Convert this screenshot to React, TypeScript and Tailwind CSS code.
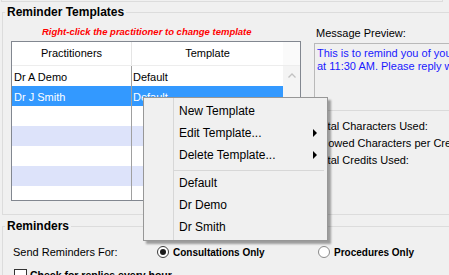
import React from "react";

const rows: { name: string; tpl: string; bg: string; sel?: boolean; h?: string }[] = [
  { name: "Dr A Demo", tpl: "Default", bg: "bg-white" },
  { name: "Dr J Smith", tpl: "Default", bg: "bg-[#3399ff]", sel: true },
  { name: "", tpl: "", bg: "bg-white" },
  { name: "", tpl: "", bg: "bg-[#dde3fa]" },
  { name: "", tpl: "", bg: "bg-white" },
  { name: "", tpl: "", bg: "bg-[#dde3fa]" },
  { name: "", tpl: "", bg: "bg-white", h: "h-[14px]" },
];

function MenuItem({ label, arrow }: { label: string; arrow?: boolean }) {
  return (
    <div className="h-[22px] flex items-center justify-between pl-[5px] pr-[10px] text-[12px] text-black">
      <span>{label}</span>
      {arrow && (
        <span className="w-0 h-0 border-y-[4px] border-y-transparent border-l-[4px] border-l-black" />
      )}
    </div>
  );
}

export default function App() {
  return (
    <div className="relative w-[449px] h-[275px] overflow-hidden bg-[#f0f0f0] font-['Liberation_Sans',Arial,sans-serif] text-[11px] text-black">
      <div className="ml-[1px] w-[442px] h-[2px] border-x border-b border-[#dcdcdc]" />

      {/* Reminder Templates group */}
      <fieldset className="mt-[2px] ml-[2px] w-[470px] h-[211px] border border-[#dcdcdc]">
        <legend className="ml-[2px] px-[2px] text-[12px] leading-[16px] font-bold">Reminder Templates</legend>
        <div className="flex">
          <div className="pl-[8px]">
            <div className="mt-[6px] pl-[31px] text-[9.5px] leading-[12px] font-bold italic text-[#ff0000] whitespace-nowrap">
              Right-click the practitioner to change template
            </div>
            <div className="mt-[3px] w-[290px] h-[160px] border border-[#828790] bg-white flex flex-col">
              <div className="flex h-[24px] border-b border-[#ededed] bg-white text-[11px]">
                <div className="w-[120px] border-r border-[#e5e5e5] flex items-center justify-center">Practitioners</div>
                <div className="w-[151px] flex items-center justify-center">Template</div>
                <div className="flex-1 bg-[#fafafa]" />
              </div>
              <div className="flex flex-1">
                <div className="w-[271px] flex flex-col">
                  {rows.map((r, i) => (
                    <div key={i} className={`flex ${r.h ?? "h-[20px]"} ${r.bg} ${r.sel ? "text-white" : "text-black"} text-[11px] leading-[20px]`}>
                      <div className="w-[120px] border-r border-[#a0a0a0] pl-[2px] pt-[1px] whitespace-nowrap">{r.name}</div>
                      <div className="flex-1 pl-[1px] pt-[1px] whitespace-nowrap">{r.tpl}</div>
                    </div>
                  ))}
                </div>
                <div className="flex-1 bg-[#f4f4f4] flex justify-center pt-[7px]">
                  <svg width="8" height="5" viewBox="0 0 8 5">
                    <path d="M0.5 4.5 L4 1 L7.5 4.5" fill="none" stroke="#c2c2c2" strokeWidth="1.3" />
                  </svg>
                </div>
              </div>
            </div>
          </div>

          <div className="ml-[13px] flex-1">
            <div className="mt-[7px] pl-[2px] leading-[13px] whitespace-nowrap">Message Preview:</div>
            <div className="mt-[3px] h-[68px] border border-[#b9b9b9] border-b-[#dadada] border-r-0 pl-[2px] pt-[3px] text-[#1a1aff] leading-[13px] whitespace-nowrap overflow-hidden">
              <div>This is to remind you of your appointment with Dr A Demo on</div>
              <div>at 11:30 AM. Please reply with YES to confirm.</div>
            </div>
            <div className="mt-[7px] pl-[2px] leading-[17px] whitespace-nowrap">
              <div>Total Characters Used:</div>
              <div>Allowed Characters per Credit:</div>
              <div>Total Credits Used:</div>
            </div>
          </div>
        </div>
      </fieldset>

      {/* Reminders group */}
      <fieldset className="mt-[3px] ml-[2px] w-[470px] h-[80px] border border-[#dcdcdc]">
        <legend className="ml-[2px] px-[2px] text-[12px] leading-[16px] font-bold">Reminders</legend>
        <div className="mt-[10px] pl-[10px] flex items-center h-[16px]">
          <div className="w-[144px] whitespace-nowrap">Send Reminders For:</div>
          <div className="w-[161px] flex items-center">
            <span className="w-[12px] h-[12px] rounded-full border border-[#3c3c3c] bg-white flex items-center justify-center">
              <span className="w-[6px] h-[6px] rounded-full bg-[#1a1a1a]" />
            </span>
            <span className="ml-[4px] text-[10px] font-bold whitespace-nowrap">Consultations Only</span>
          </div>
          <div className="flex items-center">
            <span className="w-[12px] h-[12px] rounded-full border border-[#8a8a8a] bg-white" />
            <span className="ml-[4px] text-[10px] font-bold whitespace-nowrap">Procedures Only</span>
          </div>
        </div>
        <div className="mt-[8px] pl-[11px] flex items-center">
          <span className="w-[13px] h-[13px] border border-[#333] bg-white" />
          <span className="ml-[3px] text-[10.5px] font-bold whitespace-nowrap">Check for replies every hour</span>
        </div>
      </fieldset>

      {/* Context menu */}
      <div className="absolute left-[143px] top-[97px] w-[185px] border border-[#979797] bg-[#f0f0f0] shadow-[3px_3px_2px_rgba(0,0,0,0.35)] flex">
        <div className="w-[29px]" />
        <div className="flex-1 border-l border-[#d7d7d7] pt-[2px] pb-[2px]">
          <MenuItem label="New Template" />
          <MenuItem label="Edit Template..." arrow />
          <MenuItem label="Delete Template..." arrow />
          <div className="pt-[4px] pb-[1px] pr-[3px]">
            <div className="h-px bg-[#d7d7d7]" />
          </div>
          <MenuItem label="Default" />
          <MenuItem label="Dr Demo" />
          <MenuItem label="Dr Smith" />
        </div>
      </div>
    </div>
  );
}
